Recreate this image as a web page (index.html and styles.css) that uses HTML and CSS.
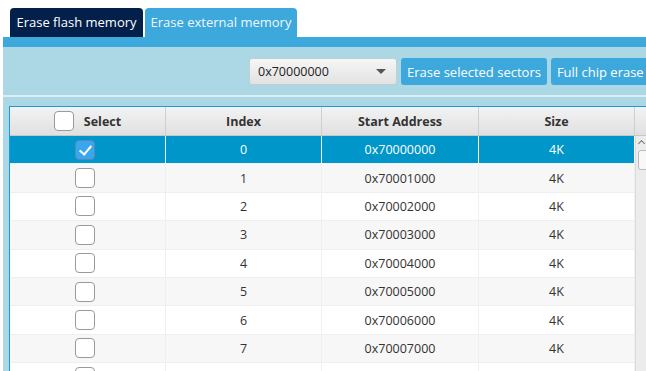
FILE: index.html
```html
<!DOCTYPE html>
<html lang="en">
<head>
    <meta charset="UTF-8">
    <title>Erase external memory</title>
    <link rel="stylesheet" href="styles.css">
</head>
<body>
    <div class="tabs">
        <div class="tab tab-dark">Erase flash memory</div>
        <div class="tab tab-active">Erase external memory</div>
    </div>
    <div class="tab-strip"></div>
    <div class="panel">
        <div class="toolbar">
            <div class="combo">
                <span>0x70000000</span>
                <span class="combo-arrow"></span>
            </div>
            <button class="btn">Erase selected sectors</button>
            <button class="btn">Full chip erase</button>
        </div>
        <div class="divider"></div>
        <div class="table-wrap">
            <div class="sector-table">
                <div class="head">
                    <div class="hcell"><span class="check head-check"></span>Select</div>
                    <div class="hcell">Index</div>
                    <div class="hcell">Start Address</div>
                    <div class="hcell">Size</div>
                    <div class="hcell filler"></div>
                </div>
                <div class="body">
                    <div class="rows" id="rows"></div>
                    <div class="scrollbar">
                        <span class="scroll-up"></span>
                        <span class="scroll-thumb"></span>
                    </div>
                </div>
            </div>
        </div>
    </div>

    <script>
        const rows = document.getElementById('rows');
        for (let i = 0; i < 9; i++) {
            const addr = '0x7000' + (i * 0x1000).toString(16).toUpperCase().padStart(4, '0');
            const row = document.createElement('div');
            row.className = 'row' + (i === 0 ? ' selected' : '') + (i % 2 ? ' odd' : '');
            const visible = i < 8;
            row.innerHTML =
                '<div class="cell check-cell"><span class="check' + (i === 0 ? ' checked' : '') + '"></span></div>' +
                '<div class="cell">' + (visible ? i : '') + '</div>' +
                '<div class="cell">' + (visible ? addr : '') + '</div>' +
                '<div class="cell">' + (visible ? '4K' : '') + '</div>';
            rows.appendChild(row);
        }
    </script>
</body>
</html>
```

FILE: styles.css
```css
body {
    margin: 0;
    background-color: white;
    font-family: "Open Sans", "Noto Sans", sans-serif;
    font-size: 12.5px;
    color: #333;
    overflow: hidden;
}
.tabs {
    display: flex;
    gap: 2px;
    padding: 8px 0 0 10px;
}
.tab {
    box-sizing: border-box;
    height: 29px;
    line-height: 29px;
    text-align: center;
    white-space: nowrap;
    color: white;
    font-size: 13px;
    border-radius: 4px 4px 0 0;
}
.tab-dark {
    width: 133px;
    background-color: #03204a;
}
.tab-active {
    width: 152px;
    background-color: #3da8dc;
    color: #eef8fd;
}
.tab-strip {
    margin-left: 3px;
    height: 10px;
    background-color: #3da8dc;
}
.panel {
    margin-left: 3px;
    background-color: #acd7e5;
    height: 400px;
}
.toolbar {
    display: flex;
    gap: 4px;
    padding: 11px 0 0 246px;
    height: 27px;
    white-space: nowrap;
    overflow: hidden;
}
.combo {
    flex-shrink: 0;
    display: flex;
    align-items: center;
    justify-content: space-between;
    box-sizing: border-box;
    width: 148px;
    height: 27px;
    padding: 0 10px 0 8px;
    border: 1px solid #c4cdd1;
    border-radius: 3px;
    background: linear-gradient(#f6f6f6, #e2e2e2);
    color: #222;
}
.combo-arrow {
    width: 0;
    height: 0;
    border-left: 5px solid transparent;
    border-right: 5px solid transparent;
    border-top: 5px solid #555;
}
.btn {
    flex-shrink: 0;
    height: 27px;
    padding: 0 6px;
    border: none;
    border-radius: 3px;
    background-color: #3da8dc;
    color: white;
    font-family: inherit;
    font-size: 13px;
}
.divider {
    margin-top: 10px;
    height: 2px;
    background-color: #dbeef4;
}
.table-wrap {
    padding: 9px 0 0 6px;
}
.sector-table {
    border: 1px solid #1a9ad6;
    border-right: none;
    background-color: white;
}
.head {
    display: grid;
    grid-template-columns: 156px 156px 157px 156px 1fr;
    height: 28px;
    background: linear-gradient(#f3f3f3, #e0e0e0);
    border-bottom: 1px solid #c8c8c8;
}
.hcell {
    display: flex;
    align-items: center;
    justify-content: center;
    font-weight: bold;
    font-size: 12.5px;
    border-right: 1px solid #cfcfcf;
}
.filler {
    border-right: none;
}
.head-check {
    margin-right: 10px;
}
.body {
    display: grid;
    grid-template-columns: 625px 1fr;
}
.row {
    display: grid;
    grid-template-columns: 156px 156px 157px 156px;
    height: 28.4px;
    box-sizing: border-box;
    border-bottom: 1px solid #efefef;
}
.row.odd {
    background-color: #f7f7f7;
}
.row.selected {
    background-color: #0096c9;
    color: white;
}
.cell {
    display: flex;
    align-items: center;
    justify-content: center;
    border-right: 1px solid #efefef;
}
.check-cell {
    padding-right: 5px;
}
.row.selected .cell {
    border-right-color: #ffffff;
}
.check {
    display: inline-block;
    box-sizing: border-box;
    width: 20px;
    height: 20px;
    border: 1px solid #9a9a9a;
    border-radius: 4px;
    background-color: white;
}
.check.checked {
    position: relative;
    background-color: #3aa6ee;
    border-color: #5a88b0;
}
.check.checked::after {
    content: "";
    position: absolute;
    left: 6px;
    top: 2px;
    width: 5px;
    height: 10px;
    border: solid white;
    border-width: 0 2px 2px 0;
    transform: rotate(40deg);
}
.scrollbar {
    position: relative;
    background-color: #ececec;
    border-left: 1px solid #dcdcdc;
}
.scroll-up {
    position: absolute;
    left: 3px;
    top: 5px;
    width: 4px;
    height: 4px;
    border-left: 1px solid #777;
    border-top: 1px solid #777;
    transform: rotate(45deg);
}
.scroll-thumb {
    position: absolute;
    left: 2px;
    top: 14px;
    width: 12px;
    height: 20px;
    box-sizing: border-box;
    border: 1px solid #bbb;
    border-radius: 3px;
    background-color: #f8f8f8;
}
```
